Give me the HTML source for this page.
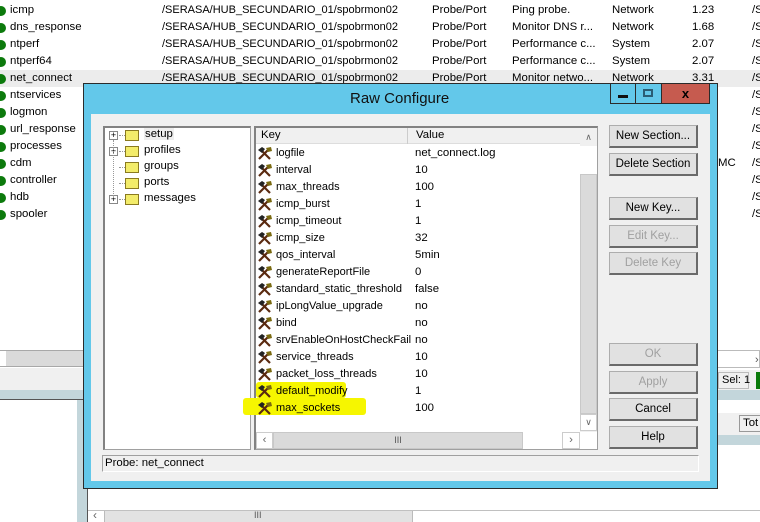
<!DOCTYPE html>
<html><head><meta charset="utf-8"><style>
*{margin:0;padding:0;box-sizing:border-box}
body{width:760px;height:522px;overflow:hidden;background:#fff;font-family:"Liberation Sans",Arial,sans-serif;font-size:11.4px;color:#000;position:relative}
.a{position:absolute;white-space:nowrap}
.dot{position:absolute;left:-4px;width:10px;height:10px;border-radius:50%;background:#0c7a0c}
.btn{position:absolute;left:609px;width:89px;height:23px;background:#e1e1e1;border:1px solid #adadad;border-right:2px solid #6a6a6a;border-bottom:2px solid #6a6a6a;text-align:center;line-height:20px;font-size:11.5px}
.dis{color:#a0a0a0}
.ico{display:inline-block;width:16px;height:14px;vertical-align:middle;margin-right:3px}
.row{position:absolute;left:257px;height:17px;line-height:17px}
.val{position:absolute;left:415px;height:17px;line-height:17px}
</style></head><body>
<div class="a" style="left:0;top:70px;width:760px;height:17px;background:#ececec"></div>
<div id="bg"></div>
<div class="a" style="left:0;top:350px;width:84px;height:17px;background:#dadada;border:1px solid #a8a8a8"></div>
<div class="a" style="left:0;top:351px;width:6px;height:15px;background:#fff"></div>
<div class="a" style="left:0;top:368px;width:84px;height:22px;background:#f0f0f0"></div>
<div class="a" style="left:0;top:390px;width:84px;height:10px;background:#c3d6db;border-bottom:1px solid #555"></div>
<div class="a" style="left:77px;top:400px;width:11px;height:122px;background:#c3d6db;border-right:1px solid #555"></div>
<div class="a" style="left:717px;top:350px;width:43px;height:18px;background:#fff;border:1px solid #bbb"></div>
<div class="a" style="left:755px;top:354px;font-size:11px;color:#555">›</div>
<div class="a" style="left:717px;top:370px;width:43px;height:20px;background:#f0f0f0"></div>
<div class="a" style="left:718px;top:372px;width:31px;height:17px;border:1px solid #bbb;line-height:15px;padding-left:3px;font-size:11px">Sel: 1</div>
<div class="a" style="left:756px;top:372px;width:4px;height:17px;background:#0a7a0a"></div>
<div class="a" style="left:717px;top:390px;width:43px;height:10px;background:#c3d6db"></div>
<div class="a" style="left:717px;top:413px;width:43px;height:22px;background:#f0f0f0"></div>
<div class="a" style="left:739px;top:415px;width:22px;height:17px;border:1px solid #999;line-height:15px;padding-left:3px">Tot</div>
<div class="a" style="left:717px;top:435px;width:43px;height:10px;background:#c3d6db"></div>
<div class="a" style="left:88px;top:510px;width:672px;height:12px;border-top:1px solid #c0c0c0;background:#fff"></div>
<div class="a" style="left:104px;top:511px;width:309px;height:11px;background:#e2e2e2;border-left:1px solid #bbb;border-right:1px solid #bbb"></div>
<div class="a" style="left:93px;top:508px;color:#666;font-size:12px">‹</div>
<div class="a" style="left:254px;top:510px;color:#555;font-size:9px">III</div>

<div class="a" style="left:83px;top:83px;width:635px;height:406px;background:#63c8ea;border:1px solid #2b2b2b"></div>
<div class="a" style="left:350px;top:90px;font-size:15px;color:#111">Raw Configure</div>
<div class="a" style="left:610px;top:83px;width:26px;height:21px;border:1px solid #2b2b2b"></div>
<div class="a" style="left:618px;top:95px;width:10px;height:3px;background:#111"></div>
<div class="a" style="left:636px;top:83px;width:26px;height:21px;border:1px solid #2b2b2b;border-left:none"></div>
<div class="a" style="left:643px;top:89px;width:10px;height:8px;border:2px solid #2a5d74"></div>
<div class="a" style="left:662px;top:83px;width:48px;height:21px;background:#c65b4f;border:1px solid #2b2b2b;border-left:none;text-align:center;font-weight:bold;font-size:13px;line-height:19px">x</div>
<div class="a" style="left:91px;top:114px;width:619px;height:367px;background:#f0f0f0"></div>

<div class="a" style="left:103px;top:126px;width:148px;height:324px;background:#fff;border:1px solid #a0a0a0;border-top:2px solid #828282;border-left:2px solid #828282"></div>
<div id="tree"></div>

<div class="a" style="left:254px;top:126px;width:344px;height:324px;background:#fff;border:1px solid #a0a0a0;border-top:2px solid #828282;border-left:2px solid #828282"></div>
<div class="a" style="left:256px;top:128px;width:324px;height:16px;background:#f0f0f0;border-bottom:1px solid #ddd"></div>
<div class="a" style="left:407px;top:128px;width:1px;height:16px;background:#ccc"></div>
<div class="a" style="left:261px;top:129px">Key</div>
<div class="a" style="left:416px;top:129px">Value</div>
<div class="a" style="left:580px;top:128px;width:17px;height:304px;background:#f0f0f0"></div>
<div class="a" style="left:580px;top:146px;width:17px;height:28px;background:#fff"></div>
<div class="a" style="left:580px;top:174px;width:17px;height:240px;background:#dadada;border:1px solid #c8c8c8"></div>
<div class="a" style="left:580px;top:414px;width:17px;height:17px;background:#fff;border:1px solid #ccc;text-align:center;font-size:9px;color:#666;line-height:14px">∨</div>
<div class="a" style="left:580px;top:129px;width:17px;height:17px;text-align:center;font-size:9px;color:#666;line-height:16px">∧</div>
<div class="a" style="left:256px;top:432px;width:324px;height:17px;background:#fff"></div>
<div class="a" style="left:256px;top:432px;width:17px;height:17px;border:1px solid #ccc;text-align:center;color:#666;line-height:14px">‹</div>
<div class="a" style="left:273px;top:432px;width:250px;height:17px;background:#dadada;border:1px solid #c8c8c8;text-align:center;font-size:9px;color:#555;line-height:15px">III</div>
<div class="a" style="left:562px;top:432px;width:18px;height:17px;border:1px solid #ccc;text-align:center;color:#666;line-height:14px">›</div>
<div class="a" style="left:256px;top:382px;width:90px;height:16px;background:#f6f600;border-radius:3px"></div>
<div class="a" style="left:243px;top:398px;width:123px;height:17px;background:#f6f600;border-radius:3px"></div>
<div id="rows"></div>

<div class="a" style="left:102px;top:455px;width:597px;height:17px;border:1px solid #a0a0a0;border-right-color:#fff;border-bottom-color:#fff;line-height:14px;padding-left:2px">Probe: net_connect</div>

<div class="btn" style="top:125px">New Section...</div>
<div class="btn" style="top:153px">Delete Section</div>
<div class="btn" style="top:197px">New Key...</div>
<div class="btn dis" style="top:225px">Edit Key...</div>
<div class="btn dis" style="top:252px">Delete Key</div>
<div class="btn dis" style="top:343px">OK</div>
<div class="btn dis" style="top:371px">Apply</div>
<div class="btn" style="top:398px">Cancel</div>
<div class="btn" style="top:426px">Help</div>

<script>
var names=["icmp","dns_response","ntperf","ntperf64","net_connect","ntservices","logmon","url_response","processes","cdm","controller","hdb","spooler"];
var det=[["Ping probe.","Network","1.23"],["Monitor DNS r...","Network","1.68"],["Performance c...","System","2.07"],["Performance c...","System","2.07"],["Monitor netwo...","Network","3.31"]];
var h="";
names.forEach(function(n,i){var y=4+i*17;
h+='<div class="dot" style="top:'+(y+2)+'px"></div><div class="a" style="left:10px;top:'+y+'px">'+n+'</div>';
if(i<5){h+='<div class="a" style="left:162px;top:'+y+'px;font-size:11px">/SERASA/HUB_SECUNDARIO_01/spobrmon02</div><div class="a" style="left:432px;top:'+y+'px">Probe/Port</div><div class="a" style="left:512px;top:'+y+'px">'+det[i][0]+'</div><div class="a" style="left:612px;top:'+y+'px">'+det[i][1]+'</div><div class="a" style="left:692px;top:'+y+'px">'+det[i][2]+'</div>';}
h+='<div class="a" style="left:752px;top:'+y+'px">/S</div>';
if(i==9)h+='<div class="a" style="left:718px;top:'+y+'px">MC</div>';
});
document.getElementById("bg").innerHTML=h;
var tr=[["setup",1],["profiles",1],["groups",0],["ports",0],["messages",1]];
var t="";tr.forEach(function(e,i){var y=128+i*16;
t+='<div class="a" style="left:119px;top:'+(y+7)+'px;width:10px;border-top:1px dotted #999"></div>';
if(e[1])t+='<div class="a" style="left:109px;top:'+(y+3)+'px;width:9px;height:9px;border:1px solid #888;background:#fff;font-size:9px;line-height:7px;text-align:center">+</div>';
t+='<div class="a" style="left:125px;top:'+(y+2)+'px;width:14px;height:11px;background:#f3ec6a;border:1px solid #8a7a20"></div>';
t+='<div class="a" style="left:144px;top:'+y+'px;'+(i==0?'background:#eee;padding:0 1px;':'')+'">'+e[0]+'</div>';});
t+='<div class="a" style="left:113px;top:140px;height:58px;border-left:1px dotted #999"></div>';
document.getElementById("tree").innerHTML=t;
var rows=[["logfile","net_connect.log"],["interval","10"],["max_threads","100"],["icmp_burst","1"],["icmp_timeout","1"],["icmp_size","32"],["qos_interval","5min"],["generateReportFile","0"],["standard_static_threshold","false"],["ipLongValue_upgrade","no"],["bind","no"],["srvEnableOnHostCheckFail","no"],["service_threads","10"],["packet_loss_threads","10"],["default_modify","1"],["max_sockets","100"]];
var ico='<svg class="ico" viewBox="0 0 16 14"><path d="M2 13L11 4" stroke="#5a2a10" stroke-width="2.2"/><path d="M13 13L5 5" stroke="#5a2a10" stroke-width="2.2"/><path d="M1 4L5 1L8 3L5 7Z" fill="#222"/><path d="M9 2L14 1L15 5L11 6Z" fill="#7a6a10"/></svg>';
var r="";rows.forEach(function(e,i){var y=145+i*17;
r+='<div class="row" style="top:'+y+'px">'+ico+'<span style="font-size:11px">'+e[0]+'</span></div><div class="val" style="top:'+y+'px">'+e[1]+'</div>';});
document.getElementById("rows").innerHTML=r;
</script>
</body></html>
